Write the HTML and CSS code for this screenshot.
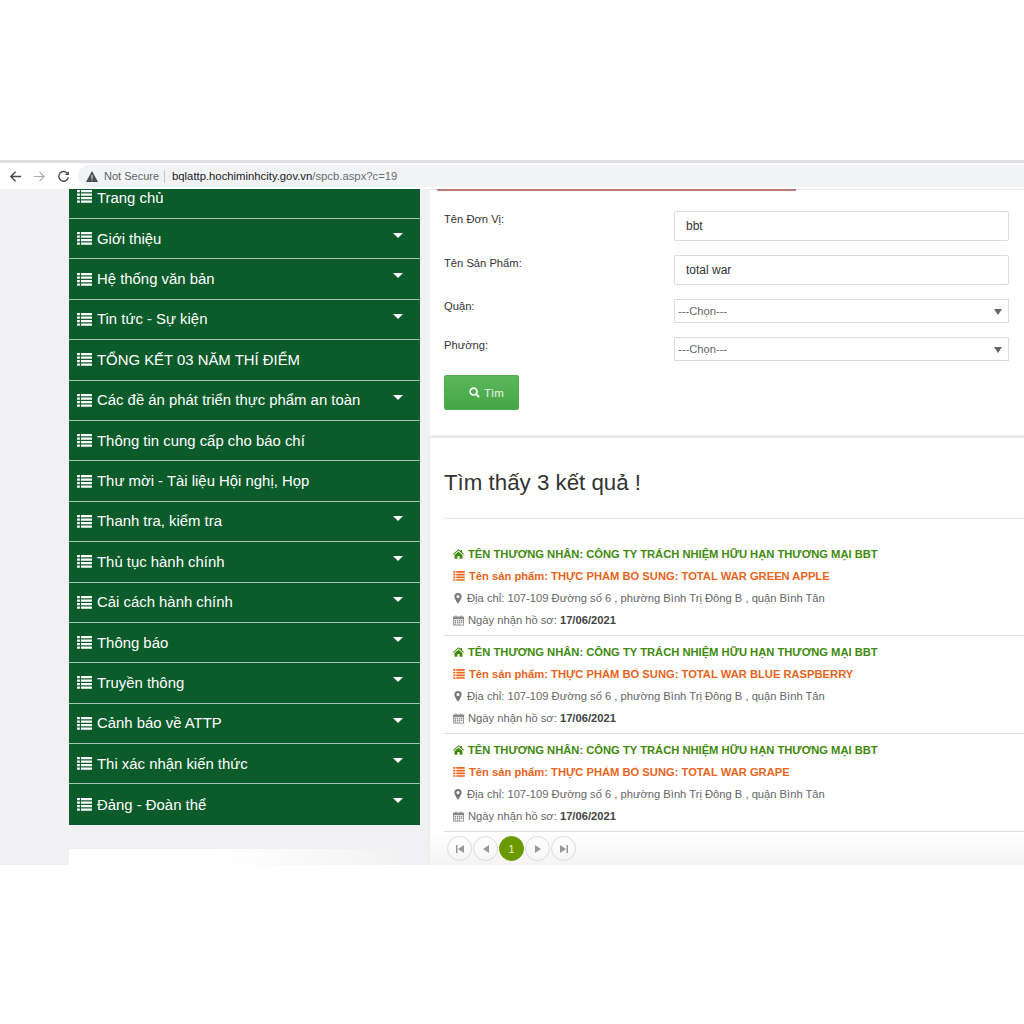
FILE: index.html
```html
<!DOCTYPE html>
<html lang="en">
<head>
    <meta charset="utf-8">
    <title>Sản phẩm chuỗi</title>
    <link rel="stylesheet" href="styles.css">
</head>
<body>
    <svg class="sprite" width="0" height="0">
        <symbol id="i-list" viewBox="0 0 16 14">
            <path d="M0 0h3v2.4H0zM4.2 0H16v2.4H4.2zM0 3.8h3v2.4H0zM4.2 3.8H16v2.4H4.2zM0 7.6h3V10H0zM4.2 7.6H16V10H4.2zM0 11.4h3v2.4H0zM4.2 11.4H16v2.4H4.2z"/>
        </symbol>
        <symbol id="i-home" viewBox="0 0 14 12">
            <path d="M7 0 L9.6 2.2V1h1.9v2.8L14 6l-.8.9L7 1.7.8 6.9 0 6zM2 7.4 7 3.2l5 4.2V12H8.400V8.600H5.600V12H2z"/>
        </symbol>
        <symbol id="i-pin" viewBox="0 0 10 14">
            <path fill-rule="evenodd" d="M5 0a4.600 4.600 0 0 1 4.600 4.600C9.600 7.500 5 14 5 14S.4 7.500.4 4.600A4.600 4.600 0 0 1 5 0zm0 2.600a2 2 0 1 0 0 4 2 2 0 0 0 0-4z"/>
        </symbol>
        <symbol id="i-cal" viewBox="0 0 14 13">
            <path fill-rule="evenodd" d="M3 0h1.500v1.500h5V0H11v1.500h2.200c.4 0 .8.400.8.800v9.900c0 .4-.4.800-.8.800H.8c-.4 0-.8-.4-.8-.8V2.300c0-.4.400-.8.800-.8H3zM1 5v7h12V5zm1 .8h2v1.600H2zm3 0h1.700v1.600H5zm2.600 0h1.700v1.600H7.600zm2.600 0H12v1.600h-1.800zM2 8.200h2v1.500H2zm3 0h1.700v1.500H5zm2.600 0h1.700v1.500H7.600zm2.600 0H12v1.500h-1.800zM2 10.400h2V11.500H2zm3 0h1.700V11.500H5zm2.600 0h1.700V11.500H7.600z"/>
        </symbol>
    </svg>

    <div class="top-space"></div>

    <div class="toolbar">
        <svg class="nav-icon" viewBox="0 0 14 14"><path d="M13 7H2M7 2 2 7l5 5" fill="none" stroke="#45474b" stroke-width="1.500"/></svg>
        <svg class="nav-icon" viewBox="0 0 14 14"><path d="M1 7h11M7 2l5 5-5 5" fill="none" stroke="#a9abae" stroke-width="1.300"/></svg>
        <svg class="nav-icon" viewBox="0 0 14 14"><path d="M11.800 4.600A5.200 5.200 0 1 0 12.200 8" fill="none" stroke="#45474b" stroke-width="1.500"/><path d="M12.800 1.300v4.200H8.600z" fill="#45474b"/></svg>
        <div class="address">
            <svg class="warn" viewBox="0 0 12 11"><path d="M6 0l6 11H0z" fill="#4a4c50"/><path d="M5.500 4h1v3.800h-1zM5.500 8.500h1v1h-1z" fill="#f1f3f4"/></svg>
            <span class="secure">Not Secure</span>
            <span class="url"><b>bqlattp.hochiminhcity.gov.vn</b>/spcb.aspx?c=19</span>
        </div>
    </div>

    <div class="page">
        <aside class="left">
            <ul class="menu">
                <li class="first"><svg class="i"><use href="#i-list"/></svg>Trang chủ</li>
                <li class="sub"><svg class="i"><use href="#i-list"/></svg>Giới thiệu</li>
                <li class="sub"><svg class="i"><use href="#i-list"/></svg>Hệ thống văn bản</li>
                <li class="sub"><svg class="i"><use href="#i-list"/></svg>Tin tức - Sự kiện</li>
                <li><svg class="i"><use href="#i-list"/></svg>TỔNG KẾT 03 NĂM THÍ ĐIỂM</li>
                <li class="sub"><svg class="i"><use href="#i-list"/></svg>Các đề án phát triển thực phẩm an toàn</li>
                <li><svg class="i"><use href="#i-list"/></svg>Thông tin cung cấp cho báo chí</li>
                <li><svg class="i"><use href="#i-list"/></svg>Thư mời - Tài liệu Hội nghị, Họp</li>
                <li class="sub"><svg class="i"><use href="#i-list"/></svg>Thanh tra, kiểm tra</li>
                <li class="sub"><svg class="i"><use href="#i-list"/></svg>Thủ tục hành chính</li>
                <li class="sub"><svg class="i"><use href="#i-list"/></svg>Cải cách hành chính</li>
                <li class="sub"><svg class="i"><use href="#i-list"/></svg>Thông báo</li>
                <li class="sub"><svg class="i"><use href="#i-list"/></svg>Truyền thông</li>
                <li class="sub"><svg class="i"><use href="#i-list"/></svg>Cảnh báo về ATTP</li>
                <li class="sub"><svg class="i"><use href="#i-list"/></svg>Thi xác nhận kiến thức</li>
                <li class="sub"><svg class="i"><use href="#i-list"/></svg>Đảng - Đoàn thể</li>
            </ul>
            <div class="left-panel"></div>
        </aside>

        <main class="right">
            <section class="search">
                <div class="red-line"></div>
                <form class="search-form">
                    <label>Tên Đơn Vị:</label>
                    <div class="field">bbt</div>
                    <label>Tên Sản Phẩm:</label>
                    <div class="field">total war</div>
                    <label class="lb-sel">Quận:</label>
                    <div class="select">---Chọn---</div>
                    <label class="lb-sel">Phường:</label>
                    <div class="select">---Chọn---</div>
                </form>
                <button class="btn-find" type="button">
                    <svg class="i-search" viewBox="0 0 12 12"><circle cx="5" cy="5" r="3.800" fill="none" stroke="#fff" stroke-width="1.700"/><path d="M7.800 7.800 11 11" stroke="#fff" stroke-width="2"/></svg>
                    Tìm
                </button>
            </section>

            <section class="results">
                <h2>Tìm thấy 3 kết quả !</h2>
                <div class="result">
                    <p class="trader"><svg class="ic-home"><use href="#i-home"/></svg>TÊN THƯƠNG NHÂN: CÔNG TY TRÁCH NHIỆM HỮU HẠN THƯƠNG MẠI BBT</p>
                    <p class="product"><svg class="ic-list"><use href="#i-list"/></svg>Tên sản phẩm: THỰC PHẨM BỔ SUNG: TOTAL WAR GREEN APPLE</p>
                    <p class="info"><svg class="ic-pin"><use href="#i-pin"/></svg>Địa chỉ: 107-109 Đường số 6 , phường Bình Trị Đông B , quận Bình Tân</p>
                    <p class="info"><svg class="ic-cal"><use href="#i-cal"/></svg>Ngày nhận hồ sơ: <strong>17/06/2021</strong></p>
                </div>
                <div class="result">
                    <p class="trader"><svg class="ic-home"><use href="#i-home"/></svg>TÊN THƯƠNG NHÂN: CÔNG TY TRÁCH NHIỆM HỮU HẠN THƯƠNG MẠI BBT</p>
                    <p class="product"><svg class="ic-list"><use href="#i-list"/></svg>Tên sản phẩm: THỰC PHẨM BỔ SUNG: TOTAL WAR BLUE RASPBERRY</p>
                    <p class="info"><svg class="ic-pin"><use href="#i-pin"/></svg>Địa chỉ: 107-109 Đường số 6 , phường Bình Trị Đông B , quận Bình Tân</p>
                    <p class="info"><svg class="ic-cal"><use href="#i-cal"/></svg>Ngày nhận hồ sơ: <strong>17/06/2021</strong></p>
                </div>
                <div class="result">
                    <p class="trader"><svg class="ic-home"><use href="#i-home"/></svg>TÊN THƯƠNG NHÂN: CÔNG TY TRÁCH NHIỆM HỮU HẠN THƯƠNG MẠI BBT</p>
                    <p class="product"><svg class="ic-list"><use href="#i-list"/></svg>Tên sản phẩm: THỰC PHẨM BỔ SUNG: TOTAL WAR GRAPE</p>
                    <p class="info"><svg class="ic-pin"><use href="#i-pin"/></svg>Địa chỉ: 107-109 Đường số 6 , phường Bình Trị Đông B , quận Bình Tân</p>
                    <p class="info"><svg class="ic-cal"><use href="#i-cal"/></svg>Ngày nhận hồ sơ: <strong>17/06/2021</strong></p>
                </div>
                <div class="pager">
                    <span class="pg"><svg viewBox="0 0 8 8"><path d="M0 0h1.500v8H0zM8 0v8L2 4z"/></svg></span>
                    <span class="pg"><svg viewBox="0 0 8 8"><path d="M7 0v8L1 4z"/></svg></span>
                    <span class="pg active">1</span>
                    <span class="pg"><svg viewBox="0 0 8 8"><path d="M1 0v8l6-4z"/></svg></span>
                    <span class="pg"><svg viewBox="0 0 8 8"><path d="M0 0v8l6-4zM6.500 0H8v8H6.500z"/></svg></span>
                </div>
            </section>
        </main>
    </div>
</body>
</html>
```

FILE: styles.css
```css
body {
    margin: 0;
    background: #fff;
    font-family: "Liberation Sans", Arial, sans-serif;
    color: #333;
}
p {
    margin: 0;
}
.sprite {
    position: absolute;
}
.top-space {
    height: 160px;
}

/* browser bar */
.toolbar {
    height: 26px;
    border-top: 3px solid #dedee3;
    display: flex;
    align-items: center;
    padding-left: 9px;
    gap: 11px;
    background: #fff;
}
.nav-icon {
    width: 13px;
    height: 13px;
}
.address {
    flex: 1;
    height: 22px;
    margin-left: -3px;
    background: #f1f3f4;
    border-radius: 11px 0 0 11px;
    display: flex;
    align-items: center;
    padding-left: 8px;
    font-size: 11px;
}
.warn {
    width: 12px;
    height: 11px;
    margin-right: 6px;
}
.secure {
    color: #5f6368;
    padding-right: 5px;
    border-right: 1px solid #c4c6c9;
    margin-right: 7px;
    line-height: 13px;
}
.url {
    color: #6b6e72;
    font-size: 11.300px;
}
.url b {
    font-weight: normal;
    color: #202124;
}

/* content area */
.page {
    height: 676px;
    overflow: hidden;
    background: #f1f1f3;
    display: flex;
}
.left {
    width: 351px;
    margin-left: 69px;
}
.menu {
    list-style: none;
    margin: 0;
    padding: 0;
    background: #0b5b2b;
    color: #fff;
    font-size: 14.900px;
}
.menu li {
    height: 40.400px;
    box-sizing: border-box;
    border-bottom: 1px solid #a9c4b2;
    padding-left: 8px;
    display: flex;
    align-items: center;
    position: relative;
}
.menu li:last-child {
    border-bottom: none;
}
.menu li.first {
    height: 30px;
    padding-top: 1px;
    align-items: flex-start;
}
.menu li.sub::after {
    content: "";
    position: absolute;
    right: 17px;
    top: 14px;
    border-left: 5px solid transparent;
    border-right: 5px solid transparent;
    border-top: 5px solid #fff;
}
.i {
    width: 15px;
    height: 13px;
    fill: #fff;
    margin-right: 5px;
    flex: none;
}
.left-panel {
    margin-top: 24px;
    height: 40px;
    width: 350px;
    background: linear-gradient(100deg, #fff 40%, #f1f1f3 100%);
}

.right {
    width: 594px;
    margin-left: 10px;
}
.search {
    background: #fff;
    height: 246px;
    padding: 0 0 0 14px;
    box-sizing: border-box;
    border-top: 1px solid #e4e4e4;
}
.red-line {
    width: 359px;
    height: 2px;
    margin-left: -7px;
    margin-top: -1px;
    background: #bd7b75;
}
.search-form {
    display: grid;
    grid-template-columns: 230px 335px;
    grid-template-rows: 30px 30px 24px 24px;
    row-gap: 14px;
    padding-top: 20px;
    font-size: 11.200px;
    color: #333;
}
.search-form label {
    padding-top: 2px;
}
.search-form label.lb-sel {
    padding-top: 1px;
}
.search-form label.lb-sel:nth-of-type(4) {
    padding-top: 2px;
}
.field {
    border: 1px solid #dcdcdc;
    border-radius: 2px;
    box-sizing: border-box;
    padding-left: 11px;
    font-size: 12px;
    display: flex;
    align-items: center;
}
.select {
    border: 1px solid #dcdcdc;
    box-sizing: border-box;
    padding-left: 3px;
    color: #666;
    display: flex;
    align-items: center;
    position: relative;
}
.select::after {
    content: "";
    position: absolute;
    right: 6px;
    top: 9px;
    border-left: 4px solid transparent;
    border-right: 4px solid transparent;
    border-top: 6px solid #666;
}
.btn-find {
    display: flex;
    align-items: center;
    justify-content: center;
    gap: 4px;
    width: 75px;
    height: 35px;
    margin-top: 14px;
    padding: 0 0 0 10px;
    border: 1px solid #4cae4c;
    border-radius: 2px;
    background: linear-gradient(#5cb85c, #44a544);
    color: #e8f5e8;
    font-family: inherit;
    font-size: 11.500px;
}
.i-search {
    width: 11px;
    height: 11px;
}

.results {
    margin-top: 3px;
    background: linear-gradient(#fff 395px, #f4f4f4 100%);
    height: 427px;
    box-sizing: border-box;
    padding-left: 14px;
    box-shadow: 0 -2px 3px rgba(0, 0, 0, 0.06);
}
.results h2 {
    margin: 0 0 19px;
    padding-top: 31px;
    height: 49px;
    font-size: 22.300px;
    font-weight: normal;
    line-height: 28px;
    color: #333;
    border-bottom: 1px solid #e6e6e6;
}
.result {
    height: 98px;
    box-sizing: border-box;
    border-bottom: 1px solid #dedede;
    padding: 5px 0 0 9px;
}
.result p {
    height: 22px;
    line-height: 22px;
    font-size: 11.200px;
    display: flex;
    align-items: center;
    white-space: pre;
}
.trader {
    color: #3f8a0c;
    font-weight: bold;
}
.product {
    color: #e8641d;
    font-weight: bold;
}
.info {
    color: #666;
}
.info strong {
    color: #444;
}
.ic-home {
    width: 11px;
    height: 10px;
    fill: #3f8a0c;
    margin-right: 4px;
}
.ic-list {
    width: 12px;
    height: 10px;
    fill: #e8641d;
    margin-right: 4px;
}
.ic-pin {
    width: 8px;
    height: 11px;
    fill: #777;
    margin-right: 5px;
    margin-left: 1px;
}
.ic-cal {
    width: 11px;
    height: 11px;
    fill: #888;
    margin-right: 4px;
}
.pager {
    display: flex;
    gap: 1px;
    padding: 4px 0 0 3px;
}
.pg {
    width: 25px;
    height: 25px;
    border-radius: 50%;
    border: 1px solid #dcdcdc;
    box-sizing: border-box;
    display: flex;
    align-items: center;
    justify-content: center;
    font-size: 11.500px;
}
.pg svg {
    width: 8px;
    height: 8px;
    fill: #999;
}
.pg.active {
    background: #6b9a00;
    border-color: #6b9a00;
    color: #e8f0d0;
}
```
